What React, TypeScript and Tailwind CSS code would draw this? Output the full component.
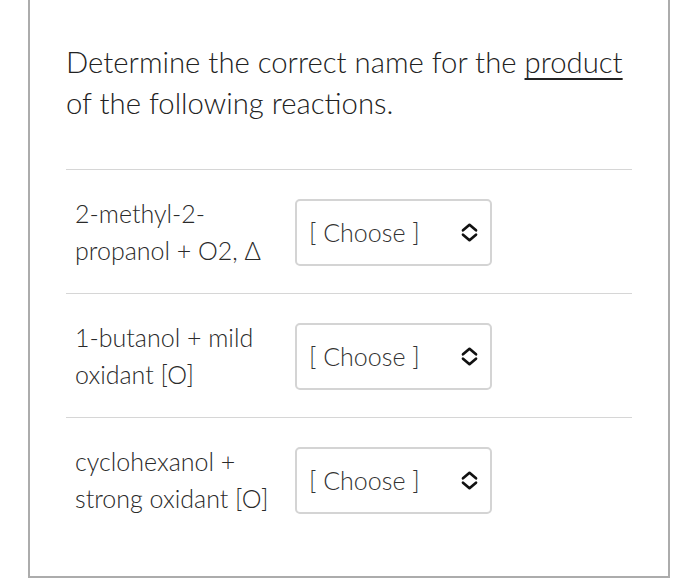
import React from "react";

const rows = [
  { label: "2-methyl-2-propanol + O2, Δ" },
  { label: "1-butanol + mild oxidant [O]" },
  { label: "cyclohexanol + strong oxidant [O]" },
];

function UpDownIcon() {
  return (
    <svg width="17" height="19" viewBox="0 0 17 19" fill="none" stroke="#111" strokeWidth="2.7" strokeLinecap="round" strokeLinejoin="round">
      <path d="M2 7.3 8.5 1.8 15 7.3" />
      <path d="M2 11.7 8.5 17.2 15 11.7" />
    </svg>
  );
}

function ChooseSelect() {
  return (
    <div className="flex h-[67px] w-[197px] shrink-0 items-center justify-between rounded-[5px] border-2 border-[#d4d4d4] pl-[12px] pr-[12px]">
      <span className="text-[25px] font-light leading-none text-[#333]">[ Choose ]</span>
      <UpDownIcon />
    </div>
  );
}

export default function App() {
  return (
    <div className="min-h-[584px] bg-white" style={{ fontFamily: "Lato, 'Noto Sans', sans-serif" }}>
      <div className="ml-[28px] w-[642px] border-x-2 border-b-2 border-[#acacac] px-[36px] pt-[41px] pb-[59px]">
        <p className="text-[29.3px] font-light leading-[41px] text-[#222]">
          Determine the correct name for the{" "}
          <span className="underline decoration-[1.5px] underline-offset-[5px]">product</span> of the following
          reactions.
        </p>
        <div className="mt-[46px]">
          {rows.map((r, i) => (
            <div
              key={i}
              className={`flex items-center border-t border-[#d6d6d6] pt-[25px] ${i === 2 ? "pb-0" : "pb-[24px]"}`}
            >
              <div className="w-[209px] shrink-0 pl-[9px] text-[25px] font-light leading-[37px] text-[#2a2a2a]">
                {r.label}
              </div>
              <div className="ml-[20px]">
                <ChooseSelect />
              </div>
            </div>
          ))}
        </div>
      </div>
    </div>
  );
}
